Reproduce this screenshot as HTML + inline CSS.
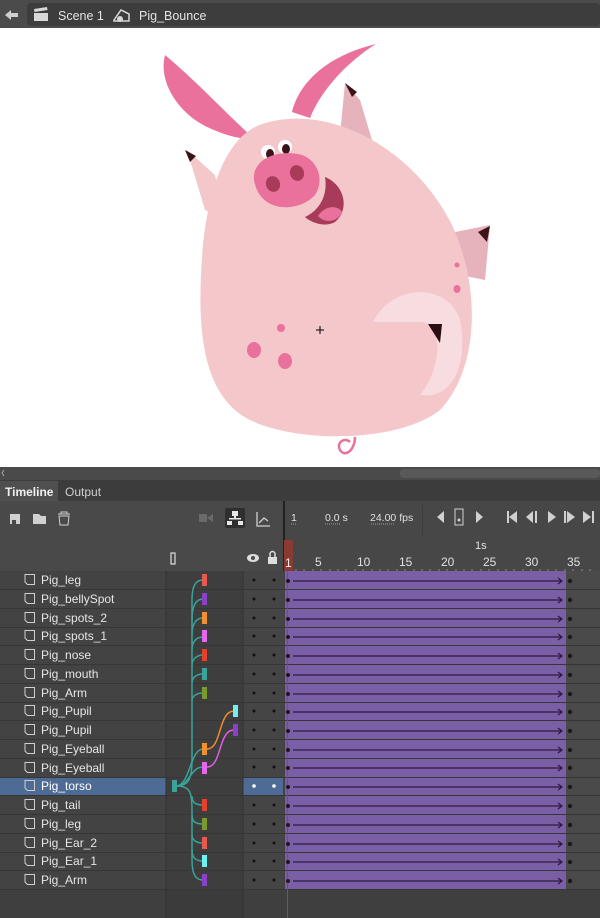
<!DOCTYPE html>
<html><head><meta charset="utf-8"><style>
html,body{margin:0;padding:0;background:#fff;}
svg{display:block;font-family:"Liberation Sans",sans-serif;}
</style></head><body>
<svg width="600" height="918" viewBox="0 0 600 918" xmlns="http://www.w3.org/2000/svg">
<rect x="0" y="0" width="600" height="28" fill="#4b4b4b"/>
<rect x="27" y="3" width="573" height="23" rx="4" fill="#3d3d3d"/>
<path d="M5 15 L11 10 L11 13 L18 13 L18 17 L11 17 L11 20 Z" fill="#cfcfcf"/>
<g fill="#d8d8d8"><rect x="34" y="13" width="14" height="8"/><path d="M34 9 L47 7 L47.5 10 L34.5 12 Z"/></g>
<text x="58" y="20" font-size="12.5" fill="#e4e4e4">Scene 1</text>
<path d="M114 20 L121 10 L129 14 L129 21 L114 21 Z" fill="none" stroke="#d8d8d8" stroke-width="1.5"/>
<circle cx="120" cy="19" r="3" fill="#d8d8d8"/>
<text x="139" y="20" font-size="12.5" fill="#e4e4e4">Pig_Bounce</text>
<rect x="0" y="28" width="600" height="439" fill="#ffffff"/>
<g>
<path d="M250 135 C225 112 195 80 165 55 C158 82 178 112 205 126 C222 134 240 140 250 138 Z" fill="#e9719b"/>
<path d="M292 112 C300 80 330 55 376 44 C350 60 322 88 310 118 Z" fill="#e9719b"/>
<path d="M345 83 L360 100 L372 140 L340 135 Z" fill="#e6b3bd"/>
<path d="M345 83 L352 97 L357 92 Z" fill="#3a1418"/>
<path d="M187 150 L215 175 L225 220 L205 210 Z" fill="#f4c7cb"/>
<path d="M185 150 L190 162 L196 156 Z" fill="#3a1418"/>
<path d="M455 232 L490 225 L485 280 L460 275 Z" fill="#e6b3bd"/>
<path d="M490 226 L478 232 L487 242 Z" fill="#3a1418"/>
<path d="M262 124 C330 102 415 150 452 225 C482 290 478 370 440 410 C400 442 300 444 250 420 C206 398 198 340 201 275 C204 200 222 138 262 124 Z" fill="#f4c7cb"/>
<path d="M373 322 C395 280 450 285 460 320 C468 360 455 400 420 395 C440 370 445 330 423 322 Z" fill="#f8dde0"/>
<path d="M428 324 L442 324 L440 343 Z" fill="#2a0e12"/>
<circle cx="268" cy="152" r="7" fill="#fff"/><circle cx="285" cy="147" r="7" fill="#fff"/>
<ellipse cx="270" cy="154" rx="4" ry="5" fill="#3a1418"/><ellipse cx="286" cy="149" rx="4" ry="5" fill="#3a1418"/>
<path d="M254 180 C252 160 275 150 298 154 C318 158 325 180 315 195 C300 212 260 215 254 180 Z" fill="#e9719b"/>
<ellipse cx="273" cy="184" rx="7" ry="8" fill="#a83a5a" transform="rotate(-20 273 184)"/>
<ellipse cx="297" cy="173" rx="7" ry="8" fill="#a83a5a" transform="rotate(-20 297 173)"/>
<path d="M325 177 C345 185 350 210 335 222 C325 228 310 222 305 217 C320 210 328 195 325 177 Z" fill="#a83a5a"/>
<path d="M318 216 C325 205 338 205 342 212 C338 222 325 224 318 216 Z" fill="#e9719b"/>
<circle cx="281" cy="328" r="4" fill="#e9719b"/>
<ellipse cx="254" cy="350" rx="7" ry="8" fill="#e9719b"/>
<ellipse cx="285" cy="361" rx="7" ry="8" fill="#e9719b"/>
<circle cx="457" cy="265" r="2.5" fill="#e9719b"/>
<ellipse cx="457" cy="289" rx="3.5" ry="4" fill="#e9719b"/>
<path d="M355 437 C355 450 345 458 340 450 C336 442 345 437 350 442" fill="none" stroke="#e9719b" stroke-width="2.5"/>
<path d="M320 326 V334 M316 330 H324" stroke="#000" stroke-width="1"/>
</g>
<rect x="0" y="467" width="600" height="13" fill="#4a4a4a"/>
<rect x="400" y="469" width="200" height="9" rx="4" fill="#595959"/>
<path d="M4 470 L2 473 L4 476" stroke="#aaa" fill="none"/>
<rect x="0" y="480" width="600" height="438" fill="#3c3c3c"/>
<rect x="0" y="481" width="58" height="20" fill="#4f4f4f"/>
<text x="5" y="496" font-size="12" font-weight="bold" fill="#f0f0f0">Timeline</text>
<text x="65" y="496" font-size="12" fill="#cfcfcf">Output</text>
<rect x="0" y="501" width="283" height="70" fill="#494949"/>
<rect x="283" y="501" width="317" height="39" fill="#474747"/>
<rect x="283" y="540" width="317" height="31" fill="#474747"/>
<g fill="#d0d0d0">
<path d="M10 514 H20 V524 H16 V520 H12 V524 H10 Z"/>
<path d="M33 514 H39 L41 516 H46 V524 H33 Z"/>
<path d="M58 514 H70 M61 514 V512 H67 V514 M59 516 H69 L68 525 H60 Z" stroke="#d0d0d0" stroke-width="1" fill="none"/>
</g>
<rect x="199" y="514" width="8" height="8" fill="#6a6a6a"/><path d="M207 518 L213 514 V522 Z" fill="#6a6a6a"/>
<rect x="225" y="508" width="20" height="20" rx="2" fill="#2f2f2f"/>
<g fill="#e8e8e8"><rect x="232" y="511" width="6" height="5"/><rect x="227" y="521" width="5" height="4"/><rect x="238" y="521" width="5" height="4"/><rect x="234" y="516" width="2" height="3"/><rect x="229" y="518" width="12" height="1.5"/></g>
<path d="M257 512 V526 H270 M259 523 L264 518 L268 521" stroke="#d0d0d0" fill="none" stroke-width="1.3"/>
<rect x="171" y="553" width="4" height="11" fill="none" stroke="#ddd" stroke-width="1.2"/>
<ellipse cx="253" cy="558" rx="6" ry="4" fill="#ddd"/><circle cx="253" cy="558" r="2" fill="#494949"/>
<rect x="268" y="557" width="9" height="7" fill="#ddd"/><path d="M270 557 V554 A2.5 2.5 0 0 1 275 554 V557" stroke="#ddd" fill="none" stroke-width="1.5"/>
<text x="291" y="521" font-size="10.5" fill="#e0e0e0">1</text>
<text x="325" y="521" font-size="10.5" fill="#e0e0e0">0.0 s</text>
<text x="370" y="521" font-size="10.5" fill="#e0e0e0">24.00 fps</text>
<path d="M291 524 H296 M325 524 H341 M371 524 H394" stroke="#999" stroke-dasharray="1 1"/>
<rect x="422" y="505" width="1" height="30" fill="#3c3c3c"/>
<g fill="#d0d0d0">
<path d="M437 517 L444 511 V523 Z"/>
<rect x="455" y="509" width="8" height="16" fill="none" stroke="#d0d0d0"/><circle cx="459" cy="520" r="1.5"/>
<path d="M483 517 L476 511 V523 Z"/>
<rect x="507" y="511" width="2" height="12"/><path d="M509 517 L517 511 V523 Z"/>
<path d="M526 517 L533 511 V523 Z"/><rect x="535" y="511" width="2" height="12"/>
<path d="M548 511 L556 517 L548 523 Z"/>
<rect x="564" y="511" width="2" height="12"/><path d="M567 511 L575 517 L567 523 Z"/>
<path d="M583 511 L591 517 L583 523 Z"/><rect x="592" y="511" width="2" height="12"/>
</g>
<rect x="283" y="501" width="2" height="417" fill="#222"/>
<text x="475" y="549" font-size="11" fill="#e0e0e0">1s</text>
<g font-size="12" fill="#e0e0e0">
<text x="315" y="566">5</text><text x="357" y="566">10</text><text x="399" y="566">15</text><text x="441" y="566">20</text><text x="483" y="566">25</text><text x="525" y="566">30</text><text x="567" y="566">35</text>
</g>
<path d="M296 569 V571 M304 569 V571 M313 569 V571 M321 569 V571 M330 569 V571 M338 569 V571 M346 569 V571 M355 569 V571 M363 569 V571 M372 569 V571 M380 569 V571 M388 569 V571 M397 569 V571 M405 569 V571 M414 569 V571 M422 569 V571 M430 569 V571 M439 569 V571 M447 569 V571 M456 569 V571 M464 569 V571 M472 569 V571 M481 569 V571 M489 569 V571 M498 569 V571 M506 569 V571 M514 569 V571 M523 569 V571 M531 569 V571 M540 569 V571 M548 569 V571 M556 569 V571 M565 569 V571 M573 569 V571 M582 569 V571 M590 569 V571" stroke="#888"/>
<rect x="284" y="540" width="9" height="31" fill="#8a3a32"/>
<text x="285" y="567" font-size="12" fill="#f0f0f0">1</text>
<g>
<rect x="0" y="571" width="600" height="319" fill="#434343"/>
<rect x="166" y="571" width="77" height="319" fill="#3e3e3e"/>
<rect x="243" y="571" width="40" height="319" fill="#454545"/>
<rect x="285" y="571" width="281" height="319" fill="#7b5fa6"/>
<rect x="566" y="571" width="34" height="319" fill="#4a4a4a"/>
<rect x="0" y="777" width="166" height="19" fill="#4d6b94"/>
<rect x="243" y="777" width="40" height="19" fill="#4d6b94"/>
<rect x="0" y="890" width="600" height="28" fill="#3f3f3f"/>
<rect x="166" y="890" width="77" height="28" fill="#3b3b3b"/>
</g>
<g stroke="#363636" stroke-width="1">
<path d="M0 589.5H600M0 608.5H600M0 627.5H600M0 645.5H600M0 664.5H600M0 683.5H600M0 702.5H600M0 720.5H600M0 739.5H600M0 758.5H600M0 777.5H600M0 795.5H600M0 814.5H600M0 833.5H600M0 852.5H600M0 870.5H600M0 889.5H600"/>
</g>
<path d="M166 571V918M243 571V918" stroke="#333"/>
<rect x="287" y="571" width="1" height="347" fill="#b03a3a"/>
<g font-size="12" fill="#e6e6e6">
<text x="41" y="584">Pig_leg</text><text x="41" y="603">Pig_bellySpot</text><text x="41" y="622">Pig_spots_2</text><text x="41" y="640">Pig_spots_1</text><text x="41" y="659">Pig_nose</text><text x="41" y="678">Pig_mouth</text><text x="41" y="697">Pig_Arm</text><text x="41" y="715">Pig_Pupil</text><text x="41" y="734">Pig_Pupil</text><text x="41" y="753">Pig_Eyeball</text><text x="41" y="772">Pig_Eyeball</text><text x="41" y="790" fill="#fff">Pig_torso</text><text x="41" y="809">Pig_tail</text><text x="41" y="828">Pig_leg</text><text x="41" y="847">Pig_Ear_2</text><text x="41" y="865">Pig_Ear_1</text><text x="41" y="884">Pig_Arm</text>
</g>
<g fill="none" stroke="#cfcfcf" stroke-width="1">
<path d="M25 574.5H34.5V584.5H27.5L25 582Z M25 593.5H34.5V603.5H27.5L25 601Z M25 612.5H34.5V622.5H27.5L25 620Z M25 630.5H34.5V640.5H27.5L25 638Z M25 649.5H34.5V659.5H27.5L25 657Z M25 668.5H34.5V678.5H27.5L25 676Z M25 687.5H34.5V697.5H27.5L25 695Z M25 705.5H34.5V715.5H27.5L25 713Z M25 724.5H34.5V734.5H27.5L25 732Z M25 743.5H34.5V753.5H27.5L25 751Z M25 762.5H34.5V772.5H27.5L25 770Z M25 780.5H34.5V790.5H27.5L25 788Z M25 799.5H34.5V809.5H27.5L25 807Z M25 818.5H34.5V828.5H27.5L25 826Z M25 837.5H34.5V847.5H27.5L25 845Z M25 855.5H34.5V865.5H27.5L25 863Z M25 874.5H34.5V884.5H27.5L25 882Z"/>
</g>
<g fill="none" stroke="#3aa39a" stroke-width="1.5">
<path d="M176 786 C188 786 192 780 192 760 V600 C192 585 196 580 203 580"/>
<path d="M192 620 C192 605 196 599 203 599"/>
<path d="M192 635 C192 624 196 618 203 618"/>
<path d="M192 650 C192 642 196 637 203 637"/>
<path d="M192 665 C192 660 196 655 203 655"/>
<path d="M192 683 C192 678 196 674 203 674"/>
<path d="M192 700 C192 697 196 693 203 693"/>
<path d="M176 786 C190 786 190 749 203 749"/>
<path d="M176 786 C190 786 190 767 203 767"/>
<path d="M176 786 C190 786 192 792 192 810 V860 C192 875 196 880 203 880"/>
<path d="M192 796 C192 803 196 805 203 805"/>
<path d="M192 815 C192 822 196 824 203 824"/>
<path d="M192 835 C192 840 196 843 203 843"/>
<path d="M192 850 C192 858 196 861 203 861"/>
</g>
<path d="M207 749 C222 749 218 711 234 711" stroke="#f08a30" stroke-width="1.5" fill="none"/>
<path d="M207 767 C222 767 218 730 234 730" stroke="#e060e0" stroke-width="1.5" fill="none"/>
<g>
<rect x="202" y="574" width="5" height="12" fill="#e85a50"/>
<rect x="202" y="593" width="5" height="12" fill="#8a40c8"/>
<rect x="202" y="612" width="5" height="12" fill="#f0902e"/>
<rect x="202" y="630" width="5" height="12" fill="#e468ec"/>
<rect x="202" y="649" width="5" height="12" fill="#e8402e"/>
<rect x="202" y="668" width="5" height="12" fill="#3aa39a"/>
<rect x="202" y="687" width="5" height="12" fill="#7a9a30"/>
<rect x="233" y="705" width="5" height="12" fill="#70f0f0"/>
<rect x="233" y="724" width="5" height="12" fill="#8a40c8"/>
<rect x="202" y="743" width="5" height="12" fill="#f0902e"/>
<rect x="202" y="762" width="5" height="12" fill="#e468ec"/>
<rect x="172" y="780" width="5" height="12" fill="#3aa39a"/>
<rect x="202" y="799" width="5" height="12" fill="#e8402e"/>
<rect x="202" y="818" width="5" height="12" fill="#7a9a30"/>
<rect x="202" y="837" width="5" height="12" fill="#e85a50"/>
<rect x="202" y="855" width="5" height="12" fill="#70f0f0"/>
<rect x="202" y="874" width="5" height="12" fill="#8a40c8"/>
</g>
<g fill="#111">
<circle cx="254" cy="580" r="1.5"/><circle cx="274" cy="580" r="1.5"/>
<circle cx="254" cy="599" r="1.5"/><circle cx="274" cy="599" r="1.5"/>
<circle cx="254" cy="618" r="1.5"/><circle cx="274" cy="618" r="1.5"/>
<circle cx="254" cy="636" r="1.5"/><circle cx="274" cy="636" r="1.5"/>
<circle cx="254" cy="655" r="1.5"/><circle cx="274" cy="655" r="1.5"/>
<circle cx="254" cy="674" r="1.5"/><circle cx="274" cy="674" r="1.5"/>
<circle cx="254" cy="693" r="1.5"/><circle cx="274" cy="693" r="1.5"/>
<circle cx="254" cy="711" r="1.5"/><circle cx="274" cy="711" r="1.5"/>
<circle cx="254" cy="730" r="1.5"/><circle cx="274" cy="730" r="1.5"/>
<circle cx="254" cy="749" r="1.5"/><circle cx="274" cy="749" r="1.5"/>
<circle cx="254" cy="767" r="1.5"/><circle cx="274" cy="767" r="1.5"/>
<circle cx="254" cy="805" r="1.5"/><circle cx="274" cy="805" r="1.5"/>
<circle cx="254" cy="824" r="1.5"/><circle cx="274" cy="824" r="1.5"/>
<circle cx="254" cy="843" r="1.5"/><circle cx="274" cy="843" r="1.5"/>
<circle cx="254" cy="861" r="1.5"/><circle cx="274" cy="861" r="1.5"/>
<circle cx="254" cy="880" r="1.5"/><circle cx="274" cy="880" r="1.5"/>
</g>
<circle cx="254" cy="786" r="1.8" fill="#fff"/><circle cx="274" cy="786" r="1.8" fill="#fff"/>
<g stroke="#2a1a40" stroke-width="1.2" fill="none">
<path d="M293 581H562M558 578L562 581L558 584M293 600H562M558 597L562 600L558 603M293 619H562M558 616L562 619L558 622M293 637H562M558 634L562 637L558 640M293 656H562M558 653L562 656L558 659M293 675H562M558 672L562 675L558 678M293 694H562M558 691L562 694L558 697M293 712H562M558 709L562 712L558 715M293 731H562M558 728L562 731L558 734M293 750H562M558 747L562 750L558 753M293 768H562M558 765L562 768L558 771M293 787H562M558 784L562 787L558 790M293 806H562M558 803L562 806L558 809M293 825H562M558 822L562 825L558 828M293 844H562M558 841L562 844L558 847M293 862H562M558 859L562 862L558 865M293 881H562M558 878L562 881L558 884"/>
</g>
<g fill="#1a1a1a">
<circle cx="288" cy="581" r="2"/><circle cx="570" cy="581" r="2.2"/><circle cx="288" cy="600" r="2"/><circle cx="570" cy="600" r="2.2"/><circle cx="288" cy="619" r="2"/><circle cx="570" cy="619" r="2.2"/><circle cx="288" cy="637" r="2"/><circle cx="570" cy="637" r="2.2"/><circle cx="288" cy="656" r="2"/><circle cx="570" cy="656" r="2.2"/><circle cx="288" cy="675" r="2"/><circle cx="570" cy="675" r="2.2"/><circle cx="288" cy="694" r="2"/><circle cx="570" cy="694" r="2.2"/><circle cx="288" cy="712" r="2"/><circle cx="570" cy="712" r="2.2"/><circle cx="288" cy="731" r="2"/><circle cx="570" cy="731" r="2.2"/><circle cx="288" cy="750" r="2"/><circle cx="570" cy="750" r="2.2"/><circle cx="288" cy="768" r="2"/><circle cx="570" cy="768" r="2.2"/><circle cx="288" cy="787" r="2"/><circle cx="570" cy="787" r="2.2"/><circle cx="288" cy="806" r="2"/><circle cx="570" cy="806" r="2.2"/><circle cx="288" cy="825" r="2"/><circle cx="570" cy="825" r="2.2"/><circle cx="288" cy="844" r="2"/><circle cx="570" cy="844" r="2.2"/><circle cx="288" cy="862" r="2"/><circle cx="570" cy="862" r="2.2"/><circle cx="288" cy="881" r="2"/><circle cx="570" cy="881" r="2.2"/>
</g>
</svg>
</body></html>
